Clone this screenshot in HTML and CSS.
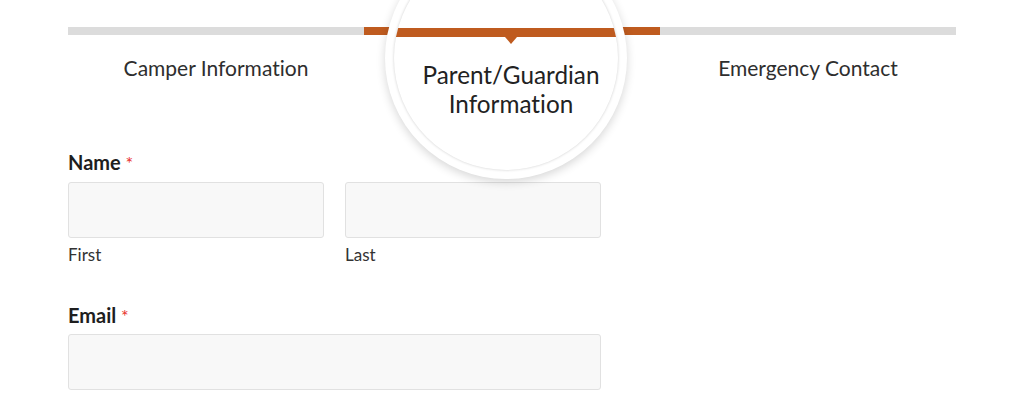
FILE: index.html
```html
<!DOCTYPE html>
<html lang="en">
<head>
<meta charset="utf-8">
<title>Registration</title>
<link rel="stylesheet" href="styles.css">
</head>
<body>
<div class="page">
  <div class="progress">
    <div class="steps">
      <div class="step"><div class="step-bar"></div><div class="step-label">Camper Information</div></div>
      <div class="step active"><div class="step-bar"></div><div class="step-label">Parent/Guardian Information</div></div>
      <div class="step"><div class="step-bar"></div><div class="step-label">Emergency Contact</div></div>
    </div>
    <div class="lens">
      <div class="lens-inner">
        <div class="lens-bar"></div>
        <div class="lens-arrow"></div>
        <div class="lens-text">Parent/Guardian<br>Information</div>
      </div>
    </div>
  </div>

  <form class="form">
    <div class="field">
      <div class="label">Name <span class="req">*</span></div>
      <div class="name-row">
        <div class="sub">
          <div class="input"></div>
          <div class="sublabel">First</div>
        </div>
        <div class="sub">
          <div class="input"></div>
          <div class="sublabel">Last</div>
        </div>
      </div>
    </div>
    <div class="field field-email">
      <div class="label">Email <span class="req">*</span></div>
      <div class="input input-wide"></div>
    </div>
  </form>
</div>
</body>
</html>
```

FILE: styles.css
```css
html, body {
  margin: 0;
  padding: 0;
  background: #ffffff;
}

body {
  font-family: Lato, "Open Sans", sans-serif;
  color: #2b2b2b;
  overflow: hidden;
  font-variant-ligatures: none;
}

.page {
  padding: 27px 0 0 68px;
}

.progress {
  position: relative;
  width: 888px;
}

.steps {
  display: grid;
  grid-template-columns: repeat(3, 1fr);
}

.step-bar {
  height: 8px;
  background: #dcdcdc;
}

.step.active .step-bar {
  background: #bf5b1f;
}

.step-label {
  margin-top: 21px;
  font-size: 21px;
  line-height: 24px;
  text-align: center;
  color: #2e2e2e;
  white-space: nowrap;
}

.step.active .step-label {
  visibility: hidden;
}

/* magnifier lens over the active step */
.lens {
  position: absolute;
  left: 317px;
  top: -90px;
  width: 242px;
  height: 242px;
  box-sizing: border-box;
  padding: 9px;
  border-radius: 50%;
  background: #ffffff;
  box-shadow: 0 3px 10px rgba(0, 0, 0, 0.16);
  z-index: 2;
}

.lens-inner {
  width: 224px;
  height: 224px;
  border-radius: 50%;
  overflow: hidden;
  background: #ffffff;
  box-shadow: 0 0 3px rgba(0, 0, 0, 0.2);
  display: flex;
  flex-direction: column;
  align-items: center;
  padding-top: 82px;
  box-sizing: border-box;
}

.lens-bar {
  align-self: stretch;
  height: 9px;
  background: #bf5b1f;
  flex: none;
}

.lens-arrow {
  width: 0;
  height: 0;
  border-left: 6px solid transparent;
  border-right: 6px solid transparent;
  border-top: 7px solid #bf5b1f;
  margin-left: 10px;
  flex: none;
}

.lens-text {
  margin-top: 16px;
  margin-left: 10px;
  font-size: 24.3px;
  line-height: 29px;
  text-align: center;
  color: #222222;
  white-space: nowrap;
}

/* form */
.form {
  margin-top: 71px;
  width: 533px;
}

.label {
  font-size: 20px;
  line-height: 22px;
  font-weight: 700;
  color: #1e1e1e;
}

.req {
  color: #e8312d;
  font-weight: 400;
  font-size: 18px;
}

.name-row {
  margin-top: 8px;
  display: grid;
  grid-template-columns: 256px 256px;
  column-gap: 21px;
}

.input {
  height: 56px;
  box-sizing: border-box;
  background: #f8f8f8;
  border: 1px solid #e1e1e1;
  border-radius: 3px;
}

.sublabel {
  margin-top: 7px;
  font-size: 17px;
  line-height: 20px;
  color: #333333;
}

.field-email {
  margin-top: 39px;
}

.field-email .input-wide {
  margin-top: 7px;
}
```
